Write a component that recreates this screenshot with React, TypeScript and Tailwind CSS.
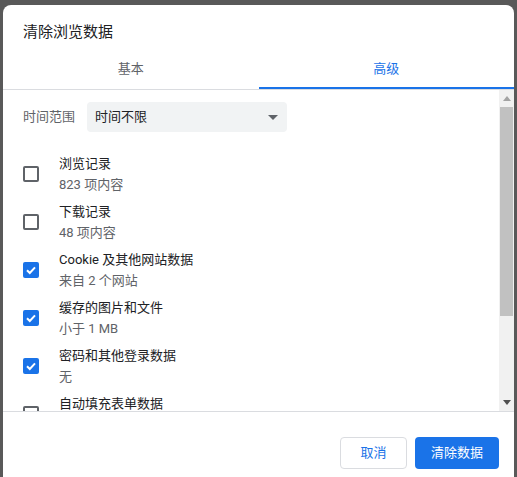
import React, { useState } from 'react'

type Item = {
  title: string
  detail: string
  checked: boolean
}

const items: Item[] = [
  { title: '浏览记录', detail: '823 项内容', checked: false },
  { title: '下载记录', detail: '48 项内容', checked: false },
  { title: 'Cookie 及其他网站数据', detail: '来自 2 个网站', checked: true },
  { title: '缓存的图片和文件', detail: '小于 1 MB', checked: true },
  { title: '密码和其他登录数据', detail: '无', checked: true },
  { title: '自动填充表单数据', detail: '', checked: false }
]

const Checkbox = ({ checked }: { checked: boolean }) =>
  checked ? (
    <div className="w-[16px] h-[16px] rounded-[2px] bg-[#1a73e8] flex items-center justify-center shrink-0">
      <svg width="12" height="12" viewBox="0 0 12 12" fill="none">
        <path d="M2 6.2 L4.8 9 L10 3.4" stroke="white" strokeWidth="2" />
      </svg>
    </div>
  ) : (
    <div className="w-[16px] h-[16px] rounded-[2px] border-2 border-[#5f6368] shrink-0" />
  )

// Classic scrollbar drawn beside the list
const Scrollbar = () => (
  <div className="w-[15px] h-full bg-[#f1f1f1] flex flex-col shrink-0">
    <div className="h-[17px] flex items-center justify-center">
      <svg width="8" height="5" viewBox="0 0 8 5">
        <path d="M0 5 L4 0 L8 5 Z" fill="#a3a3a3" />
      </svg>
    </div>
    <div className="h-[209px] mx-[1px] bg-[#c1c1c1]" />
    <div className="flex-1" />
    <div className="h-[17px] flex items-center justify-center">
      <svg width="8" height="5" viewBox="0 0 8 5">
        <path d="M0 0 L8 0 L4 5 Z" fill="#505050" />
      </svg>
    </div>
  </div>
)

export default function App() {
  const [tab, setTab] = useState<'basic' | 'advanced'>('advanced')

  return (
    <div
      className="w-[517px] h-[477px] overflow-hidden bg-[#595959] pt-[5px] px-[3px]"
      style={{ fontFamily: 'Roboto, "Noto Sans CJK SC", sans-serif' }}
    >
      <div className="h-full bg-white rounded-t-[8px] flex flex-col">
        <div className="pt-[17px] pl-[20px] text-[15px] leading-[20px] text-[#202124]">清除浏览数据</div>

        <div className="h-[48px] flex border-b border-[#dadce0]">
          {[
            { id: 'basic' as const, label: '基本' },
            { id: 'advanced' as const, label: '高级' }
          ].map(t => (
            <button
              key={t.id}
              onClick={() => setTab(t.id)}
              className={`relative flex-1 h-full flex items-end justify-center pb-[10px] text-[13px] leading-[20px] ${
                tab === t.id ? 'text-[#1a73e8]' : 'text-[#5f6368]'
              }`}
            >
              {t.label}
              {tab === t.id && <div className="absolute left-0 right-0 bottom-0 h-[2px] bg-[#1a73e8]" />}
            </button>
          ))}
        </div>

        <div className="h-[321px] flex overflow-hidden">
          <div className="flex-1 overflow-hidden pl-[20px]">
            <div className="flex items-center pt-[12px] text-[13px] text-[#5f6368]">
              <span className="w-[64px]">时间范围</span>
              <div className="w-[200px] h-[30px] rounded-[4px] bg-[#f1f3f4] flex items-center justify-between pl-[8px] pr-[9px] text-[#202124]">
                <span>时间不限</span>
                <svg width="10" height="5" viewBox="0 0 10 5">
                  <path d="M0 0 L10 0 L5 5 Z" fill="#5f6368" />
                </svg>
              </div>
            </div>

            <div className="mt-[18px]">
              {items.map(item => (
                <div key={item.title} className="h-[48px] flex items-center">
                  <Checkbox checked={item.checked} />
                  <div className="ml-[20px] text-[13px]">
                    <div className="leading-[20px] text-[#202124]">{item.title}</div>
                    <div className="leading-[20px] mt-[1px] text-[#5f6368]">{item.detail || '\u00a0'}</div>
                  </div>
                </div>
              ))}
            </div>
          </div>
          <Scrollbar />
        </div>

        <div className="border-t border-[#dadce0] pt-[25px] pr-[15px] flex justify-end gap-[8px] text-[13px]">
          <button className="w-[67px] h-[32px] rounded-[4px] border border-[#dadce0] bg-white text-[#1a73e8]">取消</button>
          <button className="w-[84px] h-[32px] rounded-[4px] bg-[#1a73e8] text-white">清除数据</button>
        </div>
      </div>
    </div>
  )
}
